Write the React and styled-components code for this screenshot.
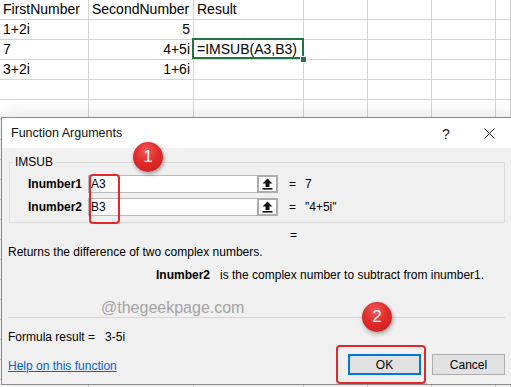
import styled, { createGlobalStyle } from 'styled-components'

const GlobalStyle = createGlobalStyle`
  body{
    margin: 0;
    background: #fff;
    font-family: "Liberation Sans", Arial, sans-serif;
  }
`

const cols = ['89px', '105px', '110px', '64px', '64px', '64px', '1fr']

const sheetRows = [
    [{ t: 'FirstNumber' }, { t: 'SecondNumber' }, { t: 'Result' }],
    [{ t: '1+2i' }, { t: '5', right: true }, {}],
    [{ t: '7' }, { t: '4+5i', right: true }, { t: '=IMSUB(A3,B3)', selected: true }],
    [{ t: '3+2i' }, { t: '1+6i', right: true }, {}],
]

const UploadIcon = () => (
    <svg width="11" height="12" viewBox="0 0 11 12">
        <polygon points="5.5,0.5 10.5,5.5 7.5,5.5 7.5,9 3.5,9 3.5,5.5 0.5,5.5" fill="#111" />
        <rect x="0.5" y="10" width="10" height="1.6" fill="#111" />
    </svg>
)

const CloseIcon = () => (
    <svg width="11" height="11" viewBox="0 0 11 11">
        <path d="M0.5 0.5 L10.5 10.5 M10.5 0.5 L0.5 10.5" stroke="#222" strokeWidth="1" />
    </svg>
)

const args = [
    { name: 'Inumber1', ref: 'A3', value: '7' },
    { name: 'Inumber2', ref: 'B3', value: '"4+5i"' },
]

const App = () => {
    const cells = []
    for (let r = 0; r < 20; r++) {
        const row = sheetRows[r] || []
        for (let c = 0; c < cols.length; c++) {
            const cell = row[c] || {}
            cells.push(
                <Cell key={r + '-' + c} $right={cell.right} $selected={cell.selected}>
                    {cell.t}
                </Cell>
            )
        }
    }
    return (
        <Page>
            <GlobalStyle />
            <Sheet>{cells}</Sheet>

            <Dialog>
                <TitleBar>
                    <Title>Function Arguments</Title>
                    <HelpMark>?</HelpMark>
                    <CloseBtn><CloseIcon /></CloseBtn>
                </TitleBar>
                <Body>
                    <Group>
                        <Legend>IMSUB</Legend>
                        <ArgList>
                            {args.map(a => (
                                <ArgRow key={a.name}>
                                    <ArgLabel>{a.name}</ArgLabel>
                                    <ArgInput>{a.ref}</ArgInput>
                                    <RefButton><UploadIcon /></RefButton>
                                    <Equals>=</Equals>
                                    <ArgValue>{a.value}</ArgValue>
                                </ArgRow>
                            ))}
                        </ArgList>
                    </Group>
                    <EqLine>=</EqLine>
                    <TextLine>Returns the difference of two complex numbers.</TextLine>
                    <Desc>
                        <b>Inumber2</b>
                        <span>is the complex number to subtract from inumber1.</span>
                    </Desc>
                    <Watermark>@thegeekpage.com</Watermark>
                    <Separator />
                    <Formula>
                        <span>Formula result =</span>
                        <span>3-5i</span>
                    </Formula>
                    <Footer>
                        <HelpLink>Help on this function</HelpLink>
                        <Button $primary>OK</Button>
                        <Button>Cancel</Button>
                    </Footer>
                </Body>
            </Dialog>

            <Highlight $x={89} $y={174} $w={31} $h={50} />
            <Highlight $x={336} $y={345} $w={90} $h={39} />
            <Badge $x={148} $y={157}>1</Badge>
            <Badge $x={377} $y={317}>2</Badge>
        </Page>
    )
}

const Page = styled.div`
    position: relative;
    width: 511px;
    height: 387px;
    overflow: hidden;
    background: #fff;
`

const Sheet = styled.div`
    display: grid;
    grid-template-columns: ${cols.join(' ')};
    grid-auto-rows: 20px;
`

const Cell = styled.div`
    position: relative;
    box-sizing: border-box;
    border-right: 1px solid #d4d4d4;
    border-bottom: 1px solid #d4d4d4;
    padding: 0 3px;
    font-size: 14px;
    line-height: 19px;
    color: #000;
    white-space: nowrap;
    text-align: ${p => (p.$right ? 'right' : 'left')};
    ${p => p.$selected && `
        &::after{
            content: '';
            position: absolute;
            left: -2px;
            top: -2px;
            right: -1px;
            bottom: 0;
            border: 2px solid #217346;
        }
        &::before{
            content: '';
            position: absolute;
            right: -3px;
            bottom: -3px;
            width: 5px;
            height: 5px;
            background: #217346;
            box-shadow: 0 0 0 1px #fff;
            z-index: 1;
        }
    `}
`

const Dialog = styled.div`
    position: absolute;
    left: 1px;
    top: 117px;
    width: 530px;
    height: 268px;
    box-sizing: border-box;
    border: 1px solid #8a8a8a;
    background: #f0f0f0;
    box-shadow: 0 0 18px rgba(0, 0, 0, 0.14);
    display: flex;
    flex-direction: column;
    font-size: 12px;
    color: #000;
`

const TitleBar = styled.div`
    height: 30px;
    background: #fff;
    display: flex;
    align-items: center;
    padding-left: 9px;
    flex-shrink: 0;
`

const Title = styled.div`
    font-size: 12.5px;
    color: #111;
    flex: 1;
`

const HelpMark = styled.div`
    font-size: 14px;
    color: #222;
    width: 42px;
    margin-top: 1px;
`

const CloseBtn = styled.div`
    width: 46px;
    display: flex;
    align-items: center;
    margin-top: 1px;
`

const Body = styled.div`
    flex: 1;
    display: flex;
    flex-direction: column;
`

const Group = styled.div`
    position: relative;
    margin: 14px 0 0 7px;
    width: 496px;
    height: 61px;
    box-sizing: border-box;
    border: 1px solid #dcdcdc;
`

const Legend = styled.div`
    position: absolute;
    top: -8px;
    left: 3px;
    padding: 0 2px;
    background: #f0f0f0;
    line-height: 14px;
    font-size: 12px;
`

const ArgList = styled.div`
    display: flex;
    flex-direction: column;
    gap: 5px;
    padding: 12px 0 0 18px;
`

const ArgRow = styled.div`
    display: flex;
    align-items: center;
    height: 18px;
`

const ArgLabel = styled.div`
    width: 60px;
    font-weight: bold;
    font-size: 12px;
`

const ArgInput = styled.div`
    width: 169px;
    height: 18px;
    box-sizing: border-box;
    background: #fff;
    border: 1px solid #b9b9b9;
    border-right: none;
    padding-left: 2px;
    line-height: 16px;
    font-size: 12px;
`

const RefButton = styled.div`
    width: 21px;
    height: 18px;
    box-sizing: border-box;
    border: 2px solid #adadad;
    background: #fff;
    display: flex;
    align-items: center;
    justify-content: center;
`

const Equals = styled.div`
    margin-left: 11px;
    width: 16px;
`

const ArgValue = styled.div``

const EqLine = styled.div`
    margin-top: 4px;
    height: 16px;
    line-height: 16px;
    padding-left: 288px;
`

const TextLine = styled.div`
    margin-top: 1px;
    height: 16px;
    line-height: 16px;
    padding-left: 6px;
`

const Desc = styled.div`
    margin-top: 7px;
    height: 16px;
    line-height: 16px;
    padding-left: 154px;
    display: flex;
    gap: 10px;
`

const Watermark = styled.div`
    margin-top: 16px;
    height: 18px;
    line-height: 18px;
    padding-left: 99px;
    font-size: 16px;
    color: #a3a3a3;
`

const Separator = styled.div`
    margin-left: 6px;
    width: 497px;
    height: 1px;
    background: #d5d5d5;
`

const Formula = styled.div`
    margin-top: 11px;
    height: 16px;
    line-height: 16px;
    padding-left: 6px;
    display: flex;
    gap: 10px;
`

const Footer = styled.div`
    margin: 9px 0 0 6px;
    width: 497px;
    display: flex;
    align-items: center;
    gap: 11px;
`

const HelpLink = styled.a`
    margin-right: auto;
    margin-top: 3px;
    color: #0066cc;
    text-decoration: underline;
    font-size: 12px;
`

const Button = styled.div`
    width: 73px;
    height: 21px;
    box-sizing: border-box;
    background: #e1e1e1;
    border: ${p => (p.$primary ? '2px solid #0078d7' : '1px solid #adadad')};
    display: flex;
    align-items: center;
    justify-content: center;
    font-size: 12px;
`

const Highlight = styled.div`
    position: absolute;
    left: ${p => p.$x}px;
    top: ${p => p.$y}px;
    width: ${p => p.$w}px;
    height: ${p => p.$h}px;
    box-sizing: border-box;
    border: 2px solid #e5262b;
    border-radius: 4px;
`

const Badge = styled.div`
    position: absolute;
    left: ${p => p.$x - 15}px;
    top: ${p => p.$y - 15}px;
    width: 30px;
    height: 30px;
    border-radius: 50%;
    background: radial-gradient(circle at 45% 30%, #f45a5a 0%, #e02b2b 45%, #c41c1c 100%);
    box-shadow: 1px 2px 4px rgba(0, 0, 0, 0.35);
    color: #fff;
    font-size: 17px;
    line-height: 30px;
    text-align: center;
`

export default App
